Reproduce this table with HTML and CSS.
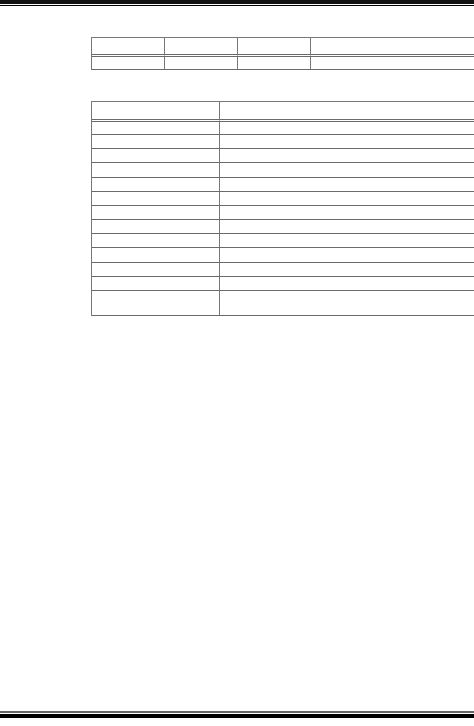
FILE: index.html
```html
<!DOCTYPE html>
<html lang="en">
<head>
<meta charset="utf-8">
<title>Document page</title>
<link rel="stylesheet" href="styles.css">
</head>
<body>
<div class="page">
  <header class="rule-top"></header>
  <main class="content">
    <div class="grid grid-a">
      <div class="cell head"></div><div class="cell head"></div><div class="cell head"></div><div class="cell head"></div>
      <div class="cell"></div><div class="cell"></div><div class="cell"></div><div class="cell"></div>
    </div>
    <div class="grid grid-b">
      <div class="cell head"></div><div class="cell head"></div>
      <div class="cell"></div><div class="cell"></div>
      <div class="cell"></div><div class="cell"></div>
      <div class="cell"></div><div class="cell"></div>
      <div class="cell"></div><div class="cell"></div>
      <div class="cell"></div><div class="cell"></div>
      <div class="cell"></div><div class="cell"></div>
      <div class="cell"></div><div class="cell"></div>
      <div class="cell"></div><div class="cell"></div>
      <div class="cell"></div><div class="cell"></div>
      <div class="cell"></div><div class="cell"></div>
      <div class="cell"></div><div class="cell"></div>
      <div class="cell"></div><div class="cell"></div>
      <div class="cell"></div><div class="cell"></div>
    </div>
  </main>
  <footer class="rule-bottom"></footer>
</div>
</body>
</html>
```
FILE: styles.css
```css
html, body {
  margin: 0;
  padding: 0;
  background: #fff;
  overflow: hidden;
  font-family: "Liberation Serif", serif;
}
.page {
  width: 474px;
  height: 726px;
  display: flex;
  flex-direction: column;
}
.rule-top {
  height: 1px;
  border-top: 4px solid #111;
  border-bottom: 1px solid #000;
}
.content {
  flex: 1;
  padding: 31px 0 0 91px;
  display: flex;
  flex-direction: column;
  gap: 31px;
}
.grid {
  display: grid;
  box-sizing: border-box;
  width: 383px;
  border-top: 1px solid #777;
  border-left: 1px solid #777;
}
.grid-a {
  grid-template-columns: 73px 73px 73px 1fr;
  grid-template-rows: 19px 13px;
}
.grid-b {
  grid-template-columns: 128px 1fr;
  grid-template-rows: 20px 13px repeat(11, 14.18px) 25px;
}
.cell {
  box-sizing: border-box;
  border-right: 1px solid #777;
  border-bottom: 1px solid #6a6a6a;
}
.grid-a .cell:nth-child(4n),
.grid-b .cell:nth-child(2n) {
  border-right: 0;
}
.cell.head {
  border-bottom: 3px double #6a6a6a;
}
.rule-bottom {
  margin-bottom: 8px;
  height: 1px;
  border-top: 2px solid #666;
  border-bottom: 4px solid #000;
}
```
